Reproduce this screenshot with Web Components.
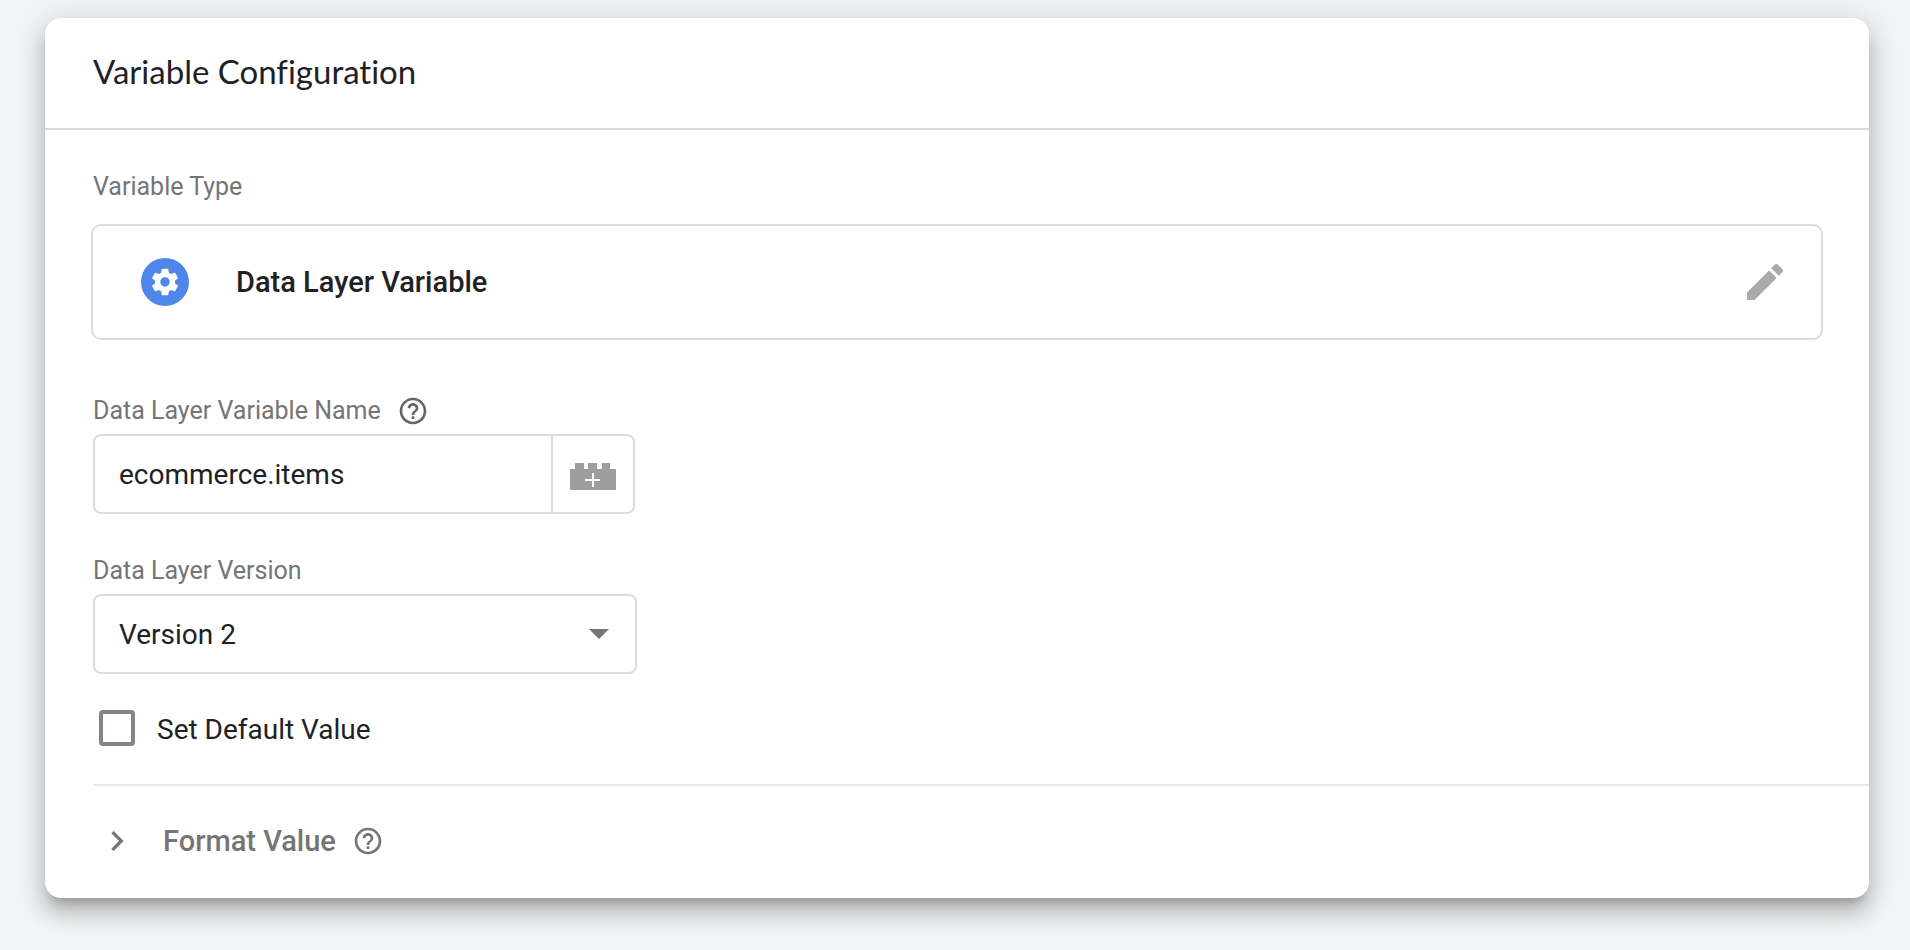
<!DOCTYPE html>
<html lang="en">
<head>
<meta charset="utf-8">
<title>Variable Configuration</title>
<style>
	body {
		margin: 0;
		padding: 18px 41px 52px 45px;
		background: #f1f3f4;
		color: #202124;
		font-family: Roboto, "Liberation Sans", sans-serif;
		font-size: 28px;
		line-height: 40px;
	}
</style>
</head>
<body>
	<config-card heading="Variable Configuration">
		<variable-type label="Variable Type">Data Layer Variable</variable-type>
		<text-field label="Data Layer Variable Name" value="ecommerce.items"></text-field>
		<select-field label="Data Layer Version" options="Version 2,Version 1"></select-field>
		<check-field label="Set Default Value"></check-field>
		<expand-section slot="footer">Format Value</expand-section>
	</config-card>

<script>
const fieldStyles = `
	* {
		box-sizing: border-box;
	}

	label, .label {
		color: #757575;
		font-size: 25px;
		line-height: 32px;
	}

	button {
		display: flex;
		align-items: center;
		justify-content: center;
		padding: 0;
		border: none;
		background: none;
		color: inherit;
		font: inherit;
		cursor: pointer;
	}
`;

function define(name, html, setup) {
	const template = document.createElement('template');
	template.innerHTML = html;

	customElements.define(name, class extends HTMLElement {
		constructor() {
			super();
			this._shadowRoot = this.attachShadow({ mode: 'open' });
			this._shadowRoot.appendChild(template.content.cloneNode(true));
		}

		connectedCallback() {
			if (setup) {
				setup(this, this._shadowRoot);
			}
		}
	});
}

define('config-card', `
	<style>
		:host {
			display: block;
			background: #fff;
			border-radius: 16px;
			box-shadow:
				0 10px 10px -6px rgba(0, 0, 0, .2),
				0 16px 20px 2px rgba(0, 0, 0, .14),
				0 6px 28px 4px rgba(0, 0, 0, .12);
		}

		header {
			padding: 33px 48px 37px;
			border-bottom: 2px solid #dadada;
		}

		h2 {
			margin: 0;
			font: 400 33px/40px "Google Sans", Lato, sans-serif;
			font-variant-ligatures: none;
		}

		.content {
			padding: 41px 46px 34px;
		}

		footer {
			margin-left: 48px;
			padding: 35px 0 37px;
			border-top: 2px solid #e8e8e8;
		}
	</style>

	<header><h2></h2></header>
	<div class="content"><slot></slot></div>
	<footer><slot name="footer"></slot></footer>
`, (host, root) => {
	root.querySelector('h2').textContent = host.getAttribute('heading');
});

define('help-button', `
	<style>
		${fieldStyles}
		:host {
			display: block;
			color: #666;
		}

		svg {
			display: block;
			width: 32px;
			height: 32px;
			fill: currentColor;
		}
	</style>

	<button type="button" aria-label="Help">
		<svg viewBox="0 0 24 24"><path d="M11 18h2v-2h-2v2zm1-16C6.48 2 2 6.48 2 12s4.48 10 10 10 10-4.48 10-10S17.52 2 12 2zm0 18c-4.41 0-8-3.59-8-8s3.59-8 8-8 8 3.59 8 8-3.59 8-8 8zm0-14c-2.21 0-4 1.79-4 4h2c0-1.1.9-2 2-2s2 .9 2 2c0 2-3 1.75-3 5h2c0-2.25 3-2.5 3-5 0-2.21-1.79-4-4-4z"/></svg>
	</button>
`);

define('variable-type', `
	<style>
		${fieldStyles}
		:host {
			display: block;
		}

		.label {
			margin: 0 2px 21px;
		}

		.box {
			display: flex;
			align-items: center;
			height: 116px;
			padding: 0 32px 0 48px;
			border: 2px solid #dcdcdc;
			border-radius: 10px;
		}

		.badge {
			display: flex;
			align-items: center;
			justify-content: center;
			width: 48px;
			height: 48px;
			border-radius: 50%;
			background: #4f86ec;
		}

		.badge svg {
			width: 32px;
			height: 32px;
			fill: #fff;
		}

		.name {
			flex: 1;
			margin-left: 47px;
			font-size: 29px;
			font-weight: 500;
		}

		button svg {
			width: 48px;
			height: 48px;
			fill: #aaa;
		}
	</style>

	<div class="label"></div>
	<div class="box">
		<span class="badge">
			<svg viewBox="0 0 24 24"><path d="M19.43 12.98c.04-.32.07-.64.07-.98s-.03-.66-.07-.98l2.11-1.65c.19-.15.24-.42.12-.64l-2-3.46c-.12-.22-.39-.3-.61-.22l-2.49 1c-.52-.4-1.08-.73-1.69-.98l-.38-2.65C14.46 2.18 14.25 2 14 2h-4c-.25 0-.46.18-.49.42l-.38 2.65c-.61.25-1.17.59-1.69.98l-2.49-1c-.23-.09-.49 0-.61.22l-2 3.46c-.13.22-.07.49.12.64l2.11 1.65c-.04.32-.07.65-.07.98s.03.66.07.98l-2.11 1.65c-.19.15-.24.42-.12.64l2 3.46c.12.22.39.3.61.22l2.49-1c.52.4 1.08.73 1.69.98l.38 2.65c.03.24.24.42.49.42h4c.25 0 .46-.18.49-.42l.38-2.65c.61-.25 1.17-.59 1.69-.98l2.49 1c.23.09.49 0 .61-.22l2-3.46c.12-.22.07-.49-.12-.64l-2.11-1.65zM12 15.5c-1.93 0-3.5-1.57-3.5-3.5s1.57-3.5 3.5-3.5 3.5 1.57 3.5 3.5-1.57 3.5-3.5 3.5z"/></svg>
		</span>
		<span class="name"><slot></slot></span>
		<button type="button" aria-label="Edit">
			<svg viewBox="0 0 24 24"><path d="M3 17.25V21h3.75L17.81 9.94l-3.75-3.75L3 17.25zM20.71 7.04c.39-.39.39-1.02 0-1.41l-2.34-2.34c-.39-.39-1.02-.39-1.41 0l-1.83 1.83 3.75 3.75 1.83-1.83z"/></svg>
		</button>
	</div>
`, (host, root) => {
	root.querySelector('.label').textContent = host.getAttribute('label');
});

define('text-field', `
	<style>
		${fieldStyles}
		:host {
			display: block;
			margin: 55px 2px 0;
		}

		.caption {
			display: flex;
			gap: 16px;
			margin-bottom: 7px;
		}

		.box {
			display: flex;
			max-width: 542px;
			height: 80px;
			border: 2px solid #dcdcdc;
			border-radius: 8px;
		}

		input {
			flex: 1;
			min-width: 0;
			padding: 2px 24px 0;
			border: none;
			background: none;
			color: inherit;
			font: inherit;
			outline: none;
		}

		.box button {
			width: 82px;
			padding-top: 5px;
			border-left: 2px solid #dcdcdc;
		}

		.box svg {
			width: 46px;
			height: 28px;
		}
	</style>

	<div class="caption">
		<label for="field"></label>
		<help-button></help-button>
	</div>
	<div class="box">
		<input id="field" type="text" spellcheck="false">
		<button type="button" aria-label="Insert variable">
			<svg viewBox="0 0 46 28">
				<path fill="#9e9e9e" d="M0 6h5V0h9v6h4V0h9v6h5V0h8v6h6v21H0z"/>
				<path stroke="#fff" stroke-width="2" d="M15 17h15M23 10v14"/>
			</svg>
		</button>
	</div>
`, (host, root) => {
	root.querySelector('label').textContent = host.getAttribute('label');
	root.querySelector('input').value = host.getAttribute('value');
});

define('select-field', `
	<style>
		${fieldStyles}
		:host {
			display: block;
			margin: 41px 2px 0;
		}

		label {
			display: block;
			margin-bottom: 7px;
		}

		.box {
			display: grid;
			align-items: center;
			max-width: 544px;
		}

		select, svg {
			grid-area: 1 / 1;
		}

		select {
			width: 100%;
			height: 80px;
			padding: 2px 64px 0 24px;
			border: 2px solid #dcdcdc;
			border-radius: 8px;
			appearance: none;
			background: none;
			color: inherit;
			font: inherit;
		}

		svg {
			justify-self: end;
			width: 20px;
			height: 10px;
			margin-right: 28px;
			fill: #757575;
			pointer-events: none;
		}
	</style>

	<label for="field"></label>
	<div class="box">
		<select id="field"></select>
		<svg viewBox="0 0 20 10"><path d="M0 0h20L10 10z"/></svg>
	</div>
`, (host, root) => {
	const select = root.querySelector('select');
	root.querySelector('label').textContent = host.getAttribute('label');
	host.getAttribute('options').split(',').forEach(name => select.add(new Option(name)));
});

define('check-field', `
	<style>
		:host {
			display: flex;
			align-items: flex-start;
			gap: 22px;
			margin: 36px 8px 0;
		}

		input {
			box-sizing: border-box;
			width: 36px;
			height: 36px;
			margin: 0;
			border: 4px solid #80868b;
			border-radius: 4px;
			appearance: none;
		}

		input:checked {
			border-color: #1a73e8;
			background: #1a73e8;
		}
	</style>

	<input id="check" type="checkbox">
	<label for="check"></label>
`, (host, root) => {
	root.querySelector('label').textContent = host.getAttribute('label');
});

define('expand-section', `
	<style>
		${fieldStyles}
		:host {
			display: flex;
			align-items: center;
			gap: 16px;
			margin-left: 4px;
			color: #757575;
			font-size: 29px;
			font-weight: 500;
		}

		.toggle {
			gap: 26px;
		}

		.toggle svg {
			width: 40px;
			height: 40px;
			fill: #757575;
		}

		.toggle[aria-expanded="true"] svg {
			transform: rotate(90deg);
		}

		help-button {
			color: #757575;
		}
	</style>

	<button class="toggle" type="button" aria-expanded="false">
		<svg viewBox="0 0 24 24"><path d="M10 6L8.59 7.41 13.17 12l-4.58 4.59L10 18l6-6z"/></svg>
		<span><slot></slot></span>
	</button>
	<help-button></help-button>
`, (host, root) => {
	const button = root.querySelector('.toggle');
	button.addEventListener('click', () => {
		button.setAttribute('aria-expanded', button.getAttribute('aria-expanded') !== 'true');
	});
});
</script>
</body>
</html>
